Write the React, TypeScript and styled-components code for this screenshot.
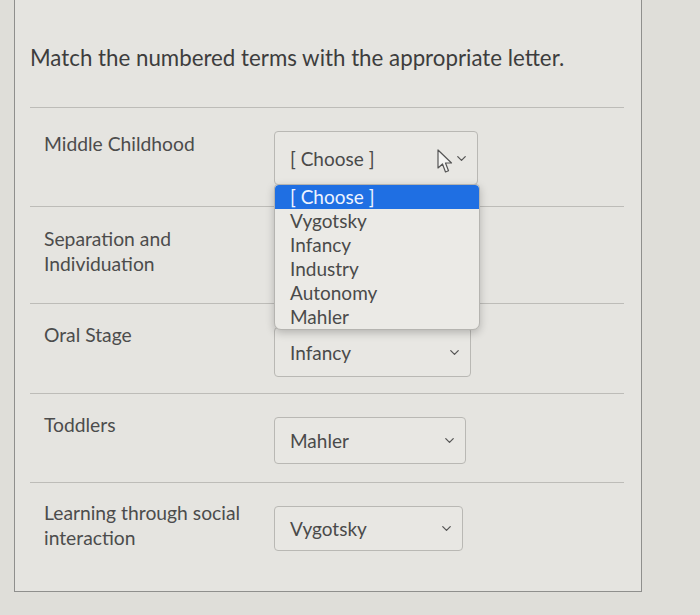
import React, { FC } from 'react';
import styled, { createGlobalStyle } from 'styled-components';
import { ChevronDown } from 'lucide-react';

const GlobalStyle = createGlobalStyle`
  html, body {
    margin: 0;
    padding: 0;
    background: #dfded9;
    font-family: Lato, 'Noto Sans', sans-serif;
    color: #4a4a4a;
  }
`;

const Page = styled.div`
  width: 700px;
  height: 615px;
  overflow: hidden;
`;

const Panel = styled.div`
  margin: -1px 0 0 14px;
  width: 628px;
  height: 593px;
  box-sizing: border-box;
  border: 1.5px solid #8f8f8d;
  background: #e5e4e0;
  padding: 45px 17px 0 15px;
`;

const Title = styled.h1`
  margin: 0 0 36px 0;
  font-size: 22.3px;
  line-height: 26px;
  font-weight: 400;
  color: #3d3d3d;
`;

const Divider = styled.div`
  height: 1px;
  background: #bdbcb8;
`;

const Row = styled.div<{ $height: number }>`
  display: flex;
  align-items: flex-start;
  height: ${({ $height }) => $height}px;
  box-sizing: border-box;
  padding: 23px 0 0 14px;
`;

const Label = styled.div<{ $shift: number }>`
  width: 230px;
  margin-top: ${({ $shift }) => $shift}px;
  font-size: 19.3px;
  line-height: 25px;
  color: #4c4c4c;
`;

const SelectBox = styled.div<{ $width: number; $height: number }>`
  position: relative;
  width: ${({ $width }) => $width}px;
  height: ${({ $height }) => $height}px;
  box-sizing: border-box;
  border: 1px solid #b9b8b4;
  border-radius: 4px;
  background: #e8e7e3;
  display: flex;
  align-items: center;
  justify-content: space-between;
  padding: 0 8px 0 15px;
  font-size: 19px;
  color: #4a4a4a;
`;

const Chevron = styled(ChevronDown)`
  color: #555;
  flex: none;
`;

const Menu = styled.ul`
  position: absolute;
  top: 100%;
  left: -1px;
  width: 204px;
  margin: 0;
  padding: 0;
  list-style: none;
  background: #ebeae6;
  border: 1px solid #b5b4b0;
  border-radius: 4px 4px 7px 7px;
  box-shadow: 0 3px 8px rgba(0, 0, 0, 0.22);
  overflow: hidden;
  z-index: 2;
`;

const Option = styled.li<{ $active?: boolean }>`
  height: 24px;
  line-height: 24px;
  padding-left: 15px;
  font-size: 19px;
  color: ${({ $active }) => ($active ? '#eef4ff' : '#4a4a4a')};
  background: ${({ $active }) => ($active ? '#1f6fe3' : 'transparent')};
  border-radius: ${({ $active }) => ($active ? '4px 4px 0 0' : '0')};
`;

const Cursor = styled.svg`
  position: absolute;
  left: 162px;
  top: 17px;
  z-index: 3;
`;

const options = ['[ Choose ]', 'Vygotsky', 'Infancy', 'Industry', 'Autonomy', 'Mahler'];

interface Item {
  label: React.ReactNode;
  value: string;
  width: number;
  height: number;
  rowHeight: number;
  shift: number;
  open?: boolean;
}

const items: Item[] = [
  { label: 'Middle Childhood', value: '[ Choose ]', width: 204, height: 54, rowHeight: 98, shift: 0, open: true },
  { label: <>Separation and<br />Individuation</>, value: '', width: 200, height: 52, rowHeight: 96, shift: -4 },
  { label: 'Oral Stage', value: 'Infancy', width: 197, height: 50, rowHeight: 89, shift: -5 },
  { label: 'Toddlers', value: 'Mahler', width: 192, height: 47, rowHeight: 88, shift: -5 },
  { label: <>Learning through social<br />interaction</>, value: 'Vygotsky', width: 189, height: 45, rowHeight: 100, shift: -6 },
];

const App: FC = () => (
  <>
    <GlobalStyle />
    <Page>
      <Panel>
        <Title>Match the numbered terms with the appropriate letter.</Title>
        {items.map((item, i) => (
          <React.Fragment key={i}>
            <Divider />
            <Row $height={item.rowHeight}>
              <Label $shift={item.shift}>{item.label}</Label>
              <SelectBox $width={item.width} $height={item.height}>
                <span>{item.value}</span>
                <Chevron size={15} strokeWidth={2} />
                {item.open && (
                  <>
                    <Cursor width="18" height="26" viewBox="0 0 18 26">
                      <path
                        d="M1 1 L1 19 L5.5 15 L8.5 23 L11.5 21.8 L8.5 14 L14.5 14 Z"
                        fill="#f4f4f2"
                        stroke="#555"
                        strokeWidth="1.2"
                        strokeLinejoin="round"
                      />
                    </Cursor>
                    <Menu>
                      {options.map((o, j) => (
                        <Option key={o} $active={j === 0}>
                          {o}
                        </Option>
                      ))}
                    </Menu>
                  </>
                )}
              </SelectBox>
            </Row>
          </React.Fragment>
        ))}
      </Panel>
    </Page>
  </>
);

export default App;
